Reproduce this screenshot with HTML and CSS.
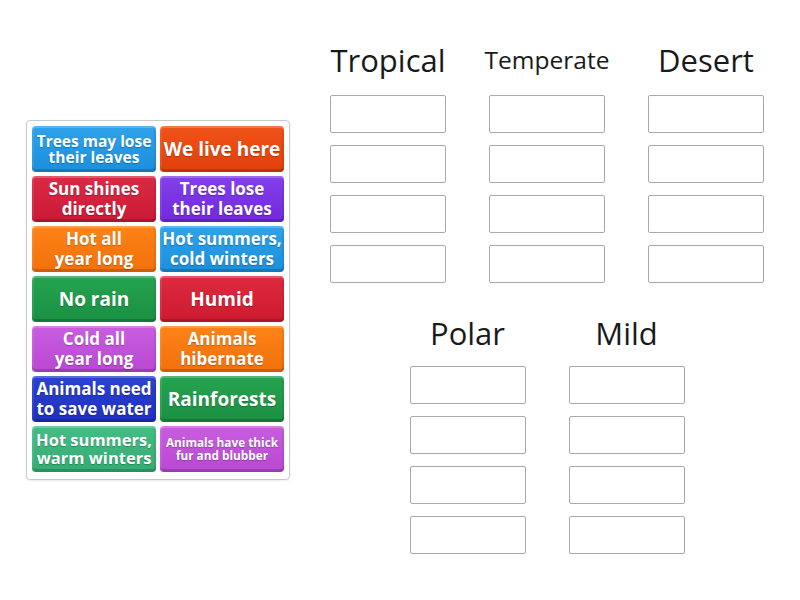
FILE: index.html
```html
<!DOCTYPE html>
<html lang="en">
<head>
<meta charset="utf-8">
<title>Climate zones</title>
<link rel="stylesheet" href="styles.css">
</head>
<body>
<div class="page">
  <div class="bank">
    <div class="card c-blue fs-sm"><span class="ln">Trees may lose</span><span class="ln">their leaves</span></div>
    <div class="card c-redorange fs-lg"><span class="ln">We live here</span></div>
    <div class="card c-crimson fs-md"><span class="ln">Sun shines</span><span class="ln">directly</span></div>
    <div class="card c-violet fs-md"><span class="ln">Trees lose</span><span class="ln">their leaves</span></div>
    <div class="card c-orange fs-md"><span class="ln">Hot all</span><span class="ln">year long</span></div>
    <div class="card c-blue fs-md"><span class="ln">Hot summers,</span><span class="ln">cold winters</span></div>
    <div class="card c-green fs-lg"><span class="ln">No rain</span></div>
    <div class="card c-red fs-lg"><span class="ln">Humid</span></div>
    <div class="card c-orchid fs-md"><span class="ln">Cold all</span><span class="ln">year long</span></div>
    <div class="card c-orange fs-md"><span class="ln">Animals</span><span class="ln">hibernate</span></div>
    <div class="card c-navy fs-md"><span class="ln">Animals need</span><span class="ln">to save water</span></div>
    <div class="card c-green fs-lg"><span class="ln">Rainforests</span></div>
    <div class="card c-teal fs-sm2"><span class="ln">Hot summers,</span><span class="ln">warm winters</span></div>
    <div class="card c-orchid fs-xs"><span class="ln">Animals have thick</span><span class="ln">fur and blubber</span></div>
  </div>
  <div class="zones">
    <div class="group">
      <div class="col">
        <div class="head">Tropical</div>
        <div class="slot"></div><div class="slot"></div><div class="slot"></div><div class="slot"></div>
      </div>
      <div class="col">
        <div class="head small">Temperate</div>
        <div class="slot"></div><div class="slot"></div><div class="slot"></div><div class="slot"></div>
      </div>
      <div class="col">
        <div class="head">Desert</div>
        <div class="slot"></div><div class="slot"></div><div class="slot"></div><div class="slot"></div>
      </div>
    </div>
    <div class="group lower">
      <div class="col">
        <div class="head">Polar</div>
        <div class="slot"></div><div class="slot"></div><div class="slot"></div><div class="slot"></div>
      </div>
      <div class="col">
        <div class="head">Mild</div>
        <div class="slot"></div><div class="slot"></div><div class="slot"></div><div class="slot"></div>
      </div>
    </div>
  </div>
</div>
</body>
</html>
```
FILE: styles.css
```css
html, body {
  margin: 0;
  padding: 0;
  background: #ffffff;
  font-family: "Open Sans", "Noto Sans", "Liberation Sans", sans-serif;
}

.page {
  display: flex;
  align-items: flex-start;
  padding-left: 26px;
  width: 800px;
  height: 600px;
  box-sizing: border-box;
}

.bank {
  margin-top: 120px;
  width: 264px;
  height: 360px;
  box-sizing: border-box;
  border: 1px solid #c9c9c9;
  border-radius: 4px;
  padding: 5px;
  display: grid;
  grid-template-columns: 124px 124px;
  grid-auto-rows: 46px;
  gap: 4px;
  box-shadow: 0 1px 2px rgba(0, 0, 0, 0.08);
}

.card {
  display: flex;
  flex-direction: column;
  align-items: center;
  justify-content: center;
  text-align: center;
  color: #ffffff;
  font-weight: 700;
  border-radius: 4px;
  padding: 0 1px;
  box-sizing: border-box;
  white-space: nowrap;
  text-shadow: 0 1px 1px rgba(0, 0, 0, 0.25);
  box-shadow: inset 0 2px 0 rgba(255, 255, 255, 0.22),
              inset 2px 0 0 rgba(255, 255, 255, 0.08),
              inset -2px 0 0 rgba(0, 0, 0, 0.06),
              inset 0 -3px 0 rgba(0, 0, 0, 0.16);
}

.ln {
  display: block;
  overflow: visible;
}

.fs-lg .ln { font-size: 19px; line-height: 22px; height: 22px; }
.fs-md .ln { font-size: 17px; line-height: 20px; height: 20px; }
.fs-sm .ln { font-size: 15.5px; line-height: 16.5px; height: 16.5px; }
.fs-sm2 .ln { font-size: 16.5px; line-height: 18.5px; height: 18.5px; }
.fs-xs .ln { font-size: 11.8px; line-height: 13px; height: 13px; }

.c-blue { background: linear-gradient(#2ea2ea, #1b8fdc); }
.c-redorange { background: linear-gradient(#f0531a, #e0400a); }
.c-crimson { background: linear-gradient(#dc2a45, #c91a36); }
.c-violet { background: linear-gradient(#8340ea, #7029dc); }
.c-orange { background: linear-gradient(#fd8318, #f2700a); }
.c-green { background: linear-gradient(#26a451, #1a8f42); }
.c-red { background: linear-gradient(#de2a3e, #cc1a2e); }
.c-orchid { background: linear-gradient(#c95ee0, #b947d2); }
.c-navy { background: linear-gradient(#2b42d2, #1f30bd); }
.c-teal { background: linear-gradient(#45be86, #33ab73); }

.zones {
  margin-left: 40px;
  padding-top: 40px;
  display: flex;
  flex-direction: column;
  align-items: center;
  width: 434px;
}

.group {
  display: flex;
  gap: 43px;
}

.group.lower {
  margin-top: 18px;
}

.col {
  width: 116px;
  display: flex;
  flex-direction: column;
  align-items: center;
}

.head {
  height: 40px;
  line-height: 40px;
  font-size: 31px;
  color: #1a1a1a;
  white-space: nowrap;
  margin-bottom: 15px;
}

.group.lower .head {
  margin-bottom: 13px;
}

.head.small {
  font-size: 24.5px;
}

.slot {
  width: 116px;
  height: 38px;
  box-sizing: border-box;
  border: 1px solid #a9a9a9;
  border-radius: 2px;
  background: #ffffff;
  margin-bottom: 12px;
}
```
